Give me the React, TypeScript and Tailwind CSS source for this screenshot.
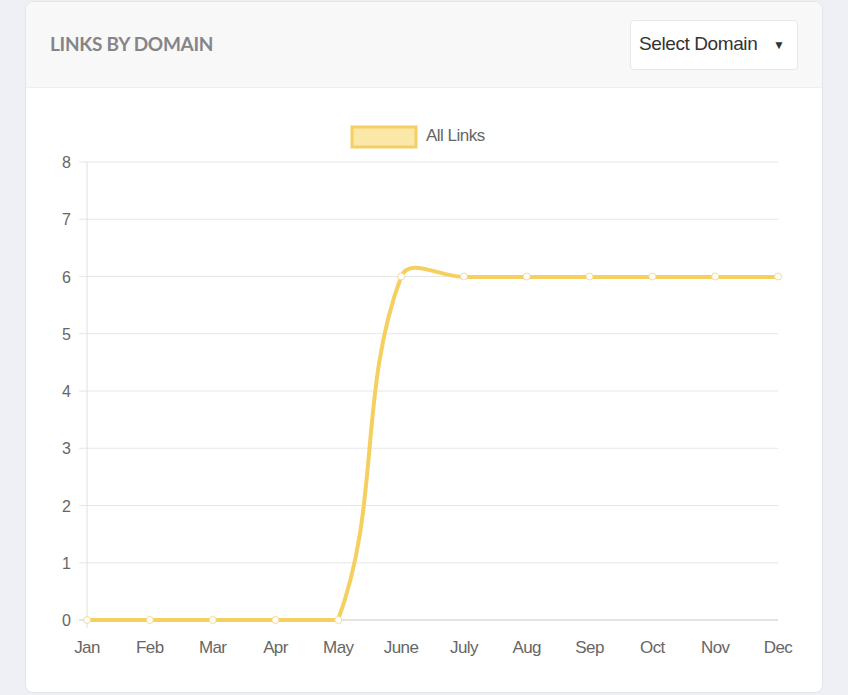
const months = ["Jan", "Feb", "Mar", "Apr", "May", "June", "July", "Aug", "Sep", "Oct", "Nov", "Dec"];
const data = [0, 0, 0, 0, 0, 6, 6, 6, 6, 6, 6, 6];
const x0 = 86;
const dx = (777 - 86) / 11;
const yFor = (v: number) => 620 - v * 57.25;

export default function App() {
  return (
    <div className="min-h-[695px] bg-[#eef0f6] pl-[25px] pt-[1px]" style={{ fontFamily: '"Liberation Sans", Arial, sans-serif' }}>
      <div className="w-[798px] h-[692px] rounded-lg border border-[#e2e4ea] bg-white overflow-hidden">
        <div className="h-[86px] bg-[#f8f8f9] border-b border-[#eeeeee] flex items-center justify-between pl-6 pr-6">
          <h2 className="text-[19px] font-bold text-[#858589] tracking-[-0.3px]" style={{ fontFamily: 'Lato, sans-serif' }}>LINKS BY DOMAIN</h2>
          <div className="w-[168px] h-[50px] bg-white border border-[#e8e8e8] rounded flex items-center pl-2 pr-2 overflow-hidden">
            <span className="text-[19px] tracking-[-0.4px] text-[#333] whitespace-nowrap overflow-hidden w-[130px]">Select Domain</span>
            <span className="text-[12px] text-[#333] ml-1">▼</span>
          </div>
        </div>
        <svg width="797" height="604" viewBox="25 88 797 604" className="block">
          <rect x="351" y="127" width="64" height="20" fill="#fbe8a8" stroke="#f5cf63" strokeWidth="3" />
          <text x="425" y="141" fontSize="17" fill="#666" letterSpacing="-0.5">All Links</text>
          {[0, 1, 2, 3, 4, 5, 6, 7, 8].map((v) => (
            <g key={v}>
              <line x1="78" x2="777" y1={yFor(v)} y2={yFor(v)} stroke={v === 0 ? "#c9c9c9" : "#e6e6e6"} strokeWidth="1" />
              <text x="70" y={yFor(v) + 6} fontSize="16" fill="#666" textAnchor="end">{v}</text>
            </g>
          ))}
          <line x1="86" x2="86" y1="162" y2="628" stroke="#e0e0e0" />
          {months.map((m, i) => (
            <text key={m} x={x0 + i * dx} y="653" fontSize="17" fill="#666" textAnchor="middle" letterSpacing="-0.6">{m}</text>
          ))}
          <path
            d="M86 620 L337 620 C380 504 357 393 400 277 C408 256 438 277 463 277 L777 277"
            fill="none"
            stroke="#f5cf5f"
            strokeWidth="4"
          />
          {data.map((v, i) => (
            <circle key={i} cx={x0 + i * dx} cy={yFor(v)} r="3.5" fill="#fff" stroke="#f7dc8d" strokeWidth="1" />
          ))}
        </svg>
      </div>
    </div>
  );
}
